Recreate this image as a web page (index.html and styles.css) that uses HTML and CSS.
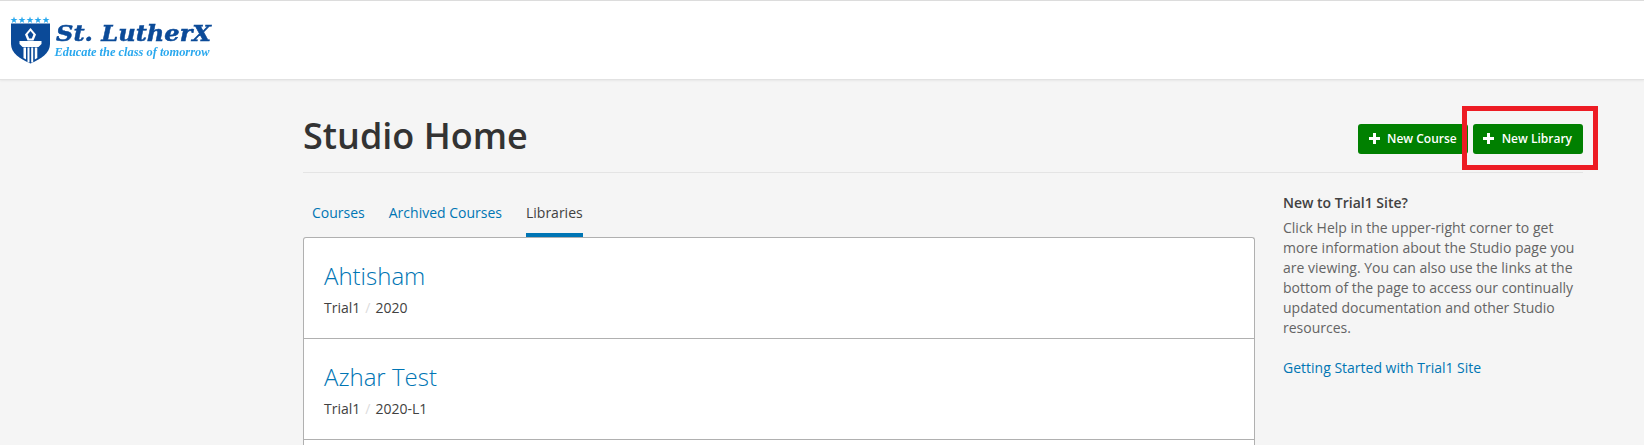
FILE: index.html
```html
<!DOCTYPE html>
<html lang="en">
<head>
<meta charset="utf-8">
<title>Studio Home</title>
<link rel="stylesheet" href="styles.css">
</head>
<body>
<header class="topbar">
  <a class="logo" href="#" aria-label="St. LutherX">
    <svg class="logo-svg" width="300" height="50" viewBox="0 0 300 50">
      <g fill="#29a8ee">
        <polygon id="s" points="14,1.5 14.9,4 17.5,4 15.4,5.6 16.2,8 14,6.5 11.8,8 12.6,5.6 10.5,4 13.1,4"/>
        <use href="#s" x="8"/><use href="#s" x="16"/><use href="#s" x="24"/><use href="#s" x="32"/>
      </g>
      <path d="M11 8.5H50V29C50 38 41 44 30.5 48.5C20 44 11 38 11 29Z" fill="#0b4a98"/>
      <path d="M30.5 13L36 19.5L33.5 25.5H27.5L25 19.5Z" fill="#fff"/>
      <path d="M30.5 16L33.4 19.5L31.8 23.5H29.2L27.6 19.5Z" fill="#0b4a98"/>
      <path d="M19.5 26H41.5V29L38.5 32H22.5L19.5 29Z" fill="#fff"/>
      <path d="M23.5 32.5H26V44.5L23.5 43ZM27.5 32.5H29.5V47.5H27.5ZM31.2 32.5H33.2V47.5H31.2ZM34.8 32.5H37.3V43L34.8 44.5Z" fill="#fff"/>
      <text class="logo-name" x="56" y="26" textLength="155" lengthAdjust="spacingAndGlyphs">St. LutherX</text>
      <text class="logo-tag" x="54.5" y="40.5" textLength="155" lengthAdjust="spacingAndGlyphs">Educate the class of tomorrow</text>
    </svg>
  </a>
</header>

<main class="wrapper">
  <div class="page-head">
    <h1 class="page-title">Studio Home</h1>
    <nav class="actions">
      <a class="btn btn-course" href="#"><svg class="plus" width="11" height="11" viewBox="0 0 11 11"><path d="M4 0H7V4H11V7H7V11H4V7H0V4H4Z" fill="#fff"/></svg>New Course</a>
      <a class="btn btn-library" href="#"><svg class="plus" width="11" height="11" viewBox="0 0 11 11"><path d="M4 0H7V4H11V7H7V11H4V7H0V4H4Z" fill="#fff"/></svg>New Library</a>
      <span class="highlight"></span>
    </nav>
  </div>

  <div class="columns">
    <section class="content">
      <ul class="tabs">
        <li><a class="tab" href="#">Courses</a></li>
        <li><a class="tab" href="#">Archived Courses</a></li>
        <li><a class="tab tab-active" href="#">Libraries</a></li>
      </ul>
      <ul class="list">
        <li class="item">
          <a class="item-title" href="#">Ahtisham</a>
          <div class="item-meta"><span>Trial1</span><span class="sep">/</span><span>2020</span></div>
        </li>
        <li class="item">
          <a class="item-title" href="#">Azhar Test</a>
          <div class="item-meta"><span>Trial1</span><span class="sep">/</span><span>2020-L1</span></div>
        </li>
        <li class="item item-rest"></li>
      </ul>
    </section>

    <aside class="sidebar">
      <h2 class="side-title">New to Trial1 Site?</h2>
      <p class="side-text">Click Help in the upper-right corner to get more information about the Studio page you are viewing. You can also use the links at the bottom of the page to access our continually updated documentation and other Studio resources.</p>
      <a class="side-link" href="#">Getting Started with Trial1 Site</a>
    </aside>
  </div>
</main>
</body>
</html>
```

FILE: styles.css
```css
* { box-sizing: border-box; }

body {
  margin: 0;
  background: #f5f5f5;
  color: #3d3e3f;
  font-family: "Open Sans", "Noto Sans", sans-serif;
  font-size: 14px;
}

a { text-decoration: none; }
ul { list-style: none; margin: 0; padding: 0; }

.topbar {
  height: 80px;
  background: #fff;
  border-top: 1px solid #dcdcdc;
  border-bottom: 1px solid #e2e2e2;
  box-shadow: 0 1px 2px rgba(0, 0, 0, .06);
  padding-top: 14px;
}

.logo { display: block; width: 300px; }
.logo-svg { display: block; filter: blur(.35px); }

.logo-name {
  font-family: "DejaVu Serif", serif;
  font-size: 23px;
  font-weight: 700;
  font-style: italic;
  fill: #0b4a98;
  stroke: #0b4a98;
  stroke-width: .5px;
}

.logo-tag {
  font-family: "Liberation Serif", serif;
  font-size: 13px;
  font-weight: 700;
  font-style: italic;
  fill: #29a8ee;
}

.wrapper {
  width: 1280px;
  margin-left: 303px;
}

.page-head {
  height: 93px;
  display: flex;
  justify-content: space-between;
  align-items: flex-start;
  border-bottom: 1px solid #e4e4e4;
}

.page-title {
  margin: 31px 0 0;
  font-size: 36px;
  line-height: 50px;
  font-weight: 600;
  color: #333;
}

.actions {
  position: relative;
  display: flex;
  gap: 5px;
  margin-top: 44px;
}

.btn {
  display: flex;
  align-items: center;
  height: 30px;
  padding: 0 11px 1px 10px;
  background: #008000;
  border-radius: 3px;
  color: #fff;
  font-size: 12px;
  font-weight: 600;
}

.btn-course { padding-left: 11px; }

.plus { margin-right: 8px; }
.btn-course .plus { margin-right: 7px; }

.highlight {
  position: absolute;
  left: 104px;
  top: -18px;
  width: 136px;
  height: 64px;
  border: 5px solid #ed1c24;
  pointer-events: none;
}

.columns {
  display: flex;
  align-items: flex-start;
  gap: 28px;
}

.content { width: 952px; }

.tabs {
  display: flex;
  gap: 24px;
  height: 64px;
  padding: 30px 0 0 9px;
}

.tab {
  display: block;
  height: 34px;
  line-height: 20px;
  color: #0075b4;
}

.tab-active {
  color: #414141;
  border-bottom: 4px solid #0075b4;
}

.list {
  background: #fff;
  border: 1px solid #b0b0b0;
  border-bottom: 0;
  border-radius: 3px 3px 0 0;
}

.item {
  height: 101px;
  padding: 20px 20px 0;
  border-bottom: 1px solid #b0b0b0;
}

.item-rest {
  height: 6px;
  padding: 0;
  border-bottom: 0;
}

.item-title {
  display: block;
  font-size: 24px;
  line-height: 36px;
  font-weight: 300;
  color: #0075b4;
}

.item-meta {
  display: flex;
  margin-top: 4px;
  line-height: 20px;
  color: #414141;
}

.sep {
  margin: 0 5px;
  color: #dcdcdc;
}

.sidebar {
  width: 300px;
  padding-top: 20px;
}

.side-title {
  margin: 0 0 5px;
  font-size: 14px;
  line-height: 20px;
  font-weight: 600;
  color: #414141;
}

.side-text {
  margin: 0 0 20px;
  line-height: 20px;
  color: #646464;
}

.side-link {
  display: block;
  line-height: 20px;
  color: #0075b4;
}
```
